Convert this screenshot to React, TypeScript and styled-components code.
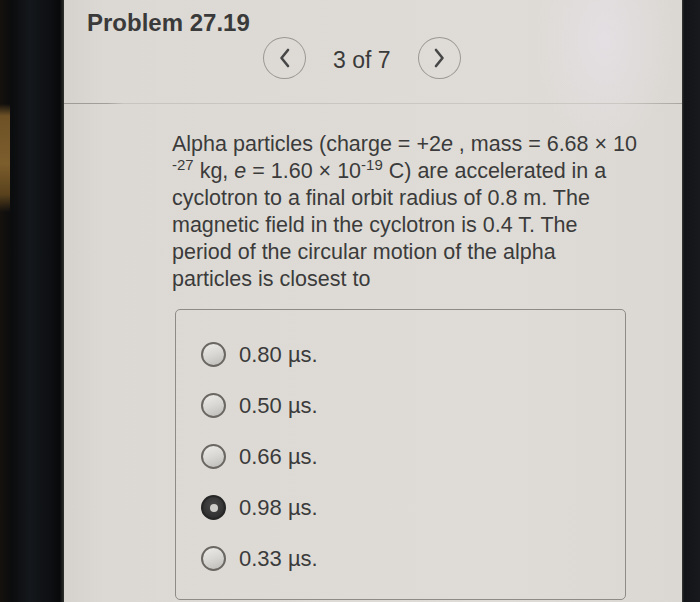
import React from "react";
import styled, { createGlobalStyle } from "styled-components";

const Global = createGlobalStyle`
  html, body { margin: 0; padding: 0; background: #0d0f12; }
  body { font-family: "Liberation Sans", Arial, sans-serif; }
  * { box-sizing: border-box; }
`;

const Frame = styled.div`
  display: flex;
  width: 700px;
  height: 602px;
  overflow: hidden;
`;

const LeftBezel = styled.div`
  width: 64px;
  flex: none;
  background:
    linear-gradient(180deg, rgba(110, 80, 34, 0) 0, #6e5226 12px, #7c5d2c 60px, #5a421d 90px, rgba(60, 40, 15, 0) 108px) 0 104px / 10px 108px no-repeat,
    linear-gradient(90deg, #15110d 0, #0b0c0e 12px, #14171b 30px, #0e1013 48px, #08090b 60px, #30322f 64px);
`;

const RightBezel = styled.div`
  width: 18px;
  flex: none;
  background: linear-gradient(90deg, #3a3a38 0, #121417 2px, #17191c 100%);
`;

const Screen = styled.div`
  flex: 1;
  display: flex;
  flex-direction: column;
  color: #3a3a3a;
  background:
    radial-gradient(ellipse 70px 120px at 540px 40px, rgba(235, 228, 240, 0.5), rgba(235, 228, 240, 0)),
    linear-gradient(90deg, #d5d2cd 0, #dcd9d4 40px, #dfdcd7 70%, #dbd8d3 100%);
`;

const Title = styled.h1`
  margin: 0;
  padding: 9px 0 0 23px;
  font-size: 24px;
  line-height: 28px;
  font-weight: 700;
  color: #3a3a3a;
`;

const Nav = styled.div`
  display: flex;
  align-items: center;
  gap: 27px;
  padding-left: 199px;
  height: 42px;
`;

const NavButton = styled.button`
  width: 43px;
  height: 42px;
  border-radius: 50%;
  border: 1.5px solid #9b9893;
  background: transparent;
  display: flex;
  align-items: center;
  justify-content: center;
  padding: 0;
  color: #444;
`;

const Counter = styled.span`
  font-size: 23px;
  margin-top: 4px;
  color: #3a3a3a;
`;

const Divider = styled.div`
  margin-top: 24px;
  height: 1px;
  background: linear-gradient(90deg, #9e9a95 0, #a29e99 43px, #c8c5c0 60px, #cbc8c3 90%, #a8a5a0 100%);
`;

const Question = styled.p`
  margin: 27px 0 0 0;
  padding-left: 108px;
  font-size: 21.5px;
  line-height: 27px;
  color: #3b3b3b;
  white-space: nowrap;
  sup {
    font-size: 15px;
    line-height: 0;
    vertical-align: 8px;
  }
`;

const Options = styled.div`
  margin: 16px 0 0 111px;
  width: 451px;
  height: 291px;
  border: 1.5px solid #8e8b86;
  border-radius: 5px;
  padding-top: 19px;
  display: flex;
  flex-direction: column;
`;

const Option = styled.label`
  display: flex;
  align-items: center;
  gap: 13px;
  height: 51px;
  padding-left: 25px;
  font-size: 22px;
  color: #3b3b3b;
`;

const Radio = styled.span<{ $checked?: boolean }>`
  width: 25px;
  height: 25px;
  border-radius: 50%;
  flex: none;
  display: flex;
  align-items: center;
  justify-content: center;
  border: 2px solid ${(p) => (p.$checked ? "#262626" : "#6a6763")};
  background: ${(p) =>
    p.$checked
      ? "radial-gradient(circle at 50% 40%, #4a4a4a 0, #262626 100%)"
      : "linear-gradient(160deg, #eeece9 0, #d9d7d3 50%, #bdbbb7 100%)"};
  &::after {
    content: "";
    display: ${(p) => (p.$checked ? "block" : "none")};
    width: 8px;
    height: 8px;
    border-radius: 50%;
    background: #cfcdc9;
  }
`;

const Chevron = ({ dir }: { dir: "left" | "right" }) => (
  <svg width="12" height="20" viewBox="0 0 12 20" fill="none">
    <polyline
      points={dir === "left" ? "9,2 2.5,10 9,18" : "3,2 9.5,10 3,18"}
      stroke="#474747"
      strokeWidth="2.6"
      strokeLinecap="round"
      strokeLinejoin="round"
    />
  </svg>
);

const answers = ["0.80", "0.50", "0.66", "0.98", "0.33"];
const selected = 3;

export default function App() {
  return (
    <>
      <Global />
      <Frame>
        <LeftBezel />
        <Screen>
          <Title>Problem 27.19</Title>
          <Nav>
            <NavButton aria-label="Previous">
              <Chevron dir="left" />
            </NavButton>
            <Counter>3 of 7</Counter>
            <NavButton aria-label="Next">
              <Chevron dir="right" />
            </NavButton>
          </Nav>
          <Divider />
          <Question>
            Alpha particles (charge = +2<i>e</i> , mass = 6.68 × 10
            <br />
            <sup>-27</sup> kg, <i>e</i> = 1.60 × 10<sup>-19</sup> C) are accelerated in a
            <br />
            cyclotron to a final orbit radius of 0.8 m. The
            <br />
            magnetic field in the cyclotron is 0.4 T. The
            <br />
            period of the circular motion of the alpha
            <br />
            particles is closest to
          </Question>
          <Options>
            {answers.map((a, i) => (
              <Option key={a}>
                <Radio $checked={i === selected} />
                {a} µs.
              </Option>
            ))}
          </Options>
        </Screen>
        <RightBezel />
      </Frame>
    </>
  );
}
